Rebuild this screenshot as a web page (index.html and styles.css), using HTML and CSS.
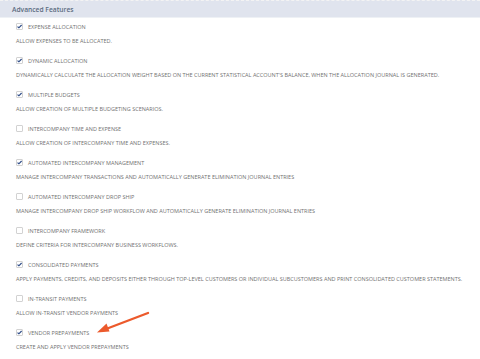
FILE: index.html
```html
<!DOCTYPE html>
<html>
<head>
<meta charset="utf-8">
<link rel="stylesheet" href="styles.css">
</head>
<body>
<div class="page">
  <div class="header">Advanced Features</div>
  <div class="list">
    <div class="item">
      <div class="label"><span class="cb on"><svg viewBox="0 0 7 7"><path d="M1.5 3.6 L2.9 4.8 L5.6 2" /></svg></span>EXPENSE ALLOCATION</div>
      <div class="desc">ALLOW EXPENSES TO BE ALLOCATED.</div>
    </div>
    <div class="item">
      <div class="label"><span class="cb on"><svg viewBox="0 0 7 7"><path d="M1.5 3.6 L2.9 4.8 L5.6 2" /></svg></span>DYNAMIC ALLOCATION</div>
      <div class="desc">DYNAMICALLY CALCULATE THE ALLOCATION WEIGHT BASED ON THE CURRENT STATISTICAL ACCOUNT'S BALANCE, WHEN THE ALLOCATION JOURNAL IS GENERATED.</div>
    </div>
    <div class="item">
      <div class="label"><span class="cb on"><svg viewBox="0 0 7 7"><path d="M1.5 3.6 L2.9 4.8 L5.6 2" /></svg></span>MULTIPLE BUDGETS</div>
      <div class="desc">ALLOW CREATION OF MULTIPLE BUDGETING SCENARIOS.</div>
    </div>
    <div class="item">
      <div class="label"><span class="cb"></span>INTERCOMPANY TIME AND EXPENSE</div>
      <div class="desc">ALLOW CREATION OF INTERCOMPANY TIME AND EXPENSES.</div>
    </div>
    <div class="item">
      <div class="label"><span class="cb on"><svg viewBox="0 0 7 7"><path d="M1.5 3.6 L2.9 4.8 L5.6 2" /></svg></span>AUTOMATED INTERCOMPANY MANAGEMENT</div>
      <div class="desc">MANAGE INTERCOMPANY TRANSACTIONS AND AUTOMATICALLY GENERATE ELIMINATION JOURNAL ENTRIES</div>
    </div>
    <div class="item">
      <div class="label"><span class="cb"></span>AUTOMATED INTERCOMPANY DROP SHIP</div>
      <div class="desc">MANAGE INTERCOMPANY DROP SHIP WORKFLOW AND AUTOMATICALLY GENERATE ELIMINATION JOURNAL ENTRIES</div>
    </div>
    <div class="item">
      <div class="label"><span class="cb"></span>INTERCOMPANY FRAMEWORK</div>
      <div class="desc">DEFINE CRITERIA FOR INTERCOMPANY BUSINESS WORKFLOWS.</div>
    </div>
    <div class="item">
      <div class="label"><span class="cb on"><svg viewBox="0 0 7 7"><path d="M1.5 3.6 L2.9 4.8 L5.6 2" /></svg></span>CONSOLIDATED PAYMENTS</div>
      <div class="desc">APPLY PAYMENTS, CREDITS, AND DEPOSITS EITHER THROUGH TOP-LEVEL CUSTOMERS OR INDIVIDUAL SUBCUSTOMERS AND PRINT CONSOLIDATED CUSTOMER STATEMENTS.</div>
    </div>
    <div class="item">
      <div class="label"><span class="cb"></span>IN-TRANSIT PAYMENTS</div>
      <div class="desc">ALLOW IN-TRANSIT VENDOR PAYMENTS</div>
    </div>
    <div class="item">
      <div class="label"><span class="cb on"><svg viewBox="0 0 7 7"><path d="M1.5 3.6 L2.9 4.8 L5.6 2" /></svg></span>VENDOR PREPAYMENTS</div>
      <div class="desc">CREATE AND APPLY VENDOR PREPAYMENTS</div>
    </div>
  </div>
  <svg class="arrow" width="480" height="359" viewBox="0 0 480 359">
    <line x1="148" y1="313" x2="106" y2="329" stroke="#ec5a2c" stroke-width="2.4" stroke-linecap="round"/>
    <path d="M97 332.5 L106.5 323.5 L109.5 331.5 Z" fill="#ec5a2c"/>
  </svg>
</div>
</body>
</html>
```

FILE: styles.css
```css
html, body {
  margin: 0;
  padding: 0;
  background: #ffffff;
}
.page {
  position: relative;
  width: 480px;
  height: 359px;
  overflow: hidden;
  font-family: "Open Sans", "Liberation Sans", sans-serif;
}
.header {
  height: 18px;
  line-height: 18px;
  box-sizing: border-box;
  padding-left: 12px;
  background: #e0e4ee;
  border-top: 1px dashed #f3f3f3;
  border-bottom: 1px solid #eef1f5;
  color: #5b6b80;
  font-size: 6.7px;
  font-weight: 600;
}
.list {
  padding: 3px 0 0 16px;
}
.item {
  height: 34px;
}
.label {
  display: flex;
  align-items: center;
  height: 11px;
  font-size: 5.5px;
  color: #727272;
}
.cb {
  width: 7px;
  height: 7px;
  box-sizing: border-box;
  border: 1px solid #d2d2d2;
  border-radius: 1px;
  background: #fff;
  margin-right: 5px;
  position: relative;
}
.cb svg {
  position: absolute;
  left: -1px;
  top: -1px;
  width: 7px;
  height: 7px;
}
.cb svg path {
  fill: none;
  stroke: #2c4a86;
  stroke-width: 1.2;
}
.desc {
  margin-top: 4px;
  height: 11px;
  line-height: 11px;
  font-size: 5.5px;
  color: #727272;
  white-space: nowrap;
}
.arrow {
  position: absolute;
  left: 0;
  top: 0;
  pointer-events: none;
}
```
